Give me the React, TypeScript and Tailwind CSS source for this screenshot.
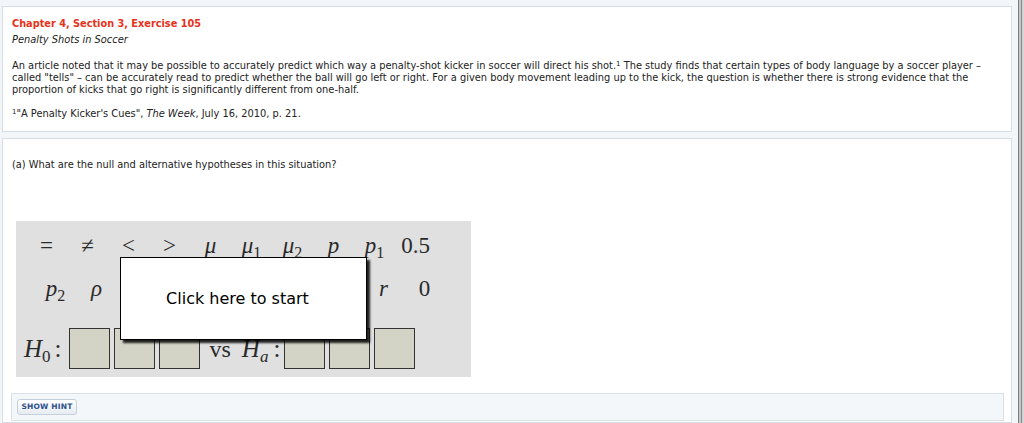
import React from "react";

const serif = "font-['Liberation_Serif','DejaVu_Serif',serif]";

interface SymProps {
  base?: string;
  sub?: string;
  italic?: boolean;
}

const Sym = ({ base, sub, italic }: SymProps) => (
  <span className="inline-flex h-[23px] w-[41px] shrink-0 items-baseline justify-center">
    {base && <span className={italic ? "italic" : ""}>{base}</span>}
    {sub && <span className="relative top-[5px] text-[16px] not-italic">{sub}</span>}
  </span>
);

const Box = () => <span className="h-[41px] w-[41px] shrink-0 border-[1.5px] border-[#333] bg-[#d4d4c6]" />;

export default function App() {
  const row1: SymProps[] = [
    { base: "=" },
    { base: "≠" },
    { base: "<" },
    { base: ">" },
    { base: "μ", italic: true },
    { base: "μ", sub: "1", italic: true },
    { base: "μ", sub: "2", italic: true },
    { base: "p", italic: true },
    { base: "p", sub: "1", italic: true },
    { base: "0.5" },
  ];
  // the middle of this row sits under the start overlay
  const row2: SymProps[] = [
    { base: "p", sub: "2", italic: true },
    { base: "ρ", italic: true },
    {},
    {},
    {},
    {},
    {},
    {},
    { base: "r", italic: true },
    { base: "0" },
  ];

  return (
    <div className="flex h-[423px] w-full overflow-hidden bg-[#f3f6f9] font-['DejaVu_Sans','Verdana',sans-serif] text-[9.85px] text-[#222]">
      <div className="flex min-w-0 flex-1 flex-col gap-[6px] pl-[2px] pr-[6px] pt-[6px]">
        <section className="border border-[#d5dde6] bg-white px-[9px] pb-[11px] pt-[10px]">
          <h1 className="text-[9.75px] font-bold leading-[13px] text-[#e8311a]">Chapter 4, Section 3, Exercise 105</h1>
          <p className="mt-[4px] italic leading-[12px]">Penalty Shots in Soccer</p>
          <p className="mt-[14px] leading-[12px] whitespace-nowrap">
            <span className="block">
              An article noted that it may be possible to accurately predict which way a penalty-shot kicker in soccer will direct his shot.
              <sup className="text-[7px]">1</sup> The study finds that certain types of body language by a soccer player –
            </span>
            <span className="block">
              called "tells" – can be accurately read to predict whether the ball will go left or right. For a given body movement leading up to the kick, the question is whether there is strong evidence that the
            </span>
            <span className="block">proportion of kicks that go right is significantly different from one-half.</span>
          </p>
          <p className="mt-[12px] leading-[12px]">
            <sup className="text-[7px]">1</sup>"A Penalty Kicker's Cues", <i>The Week</i>, July 16, 2010, p. 21.
          </p>
        </section>

        <section className="flex-1 border border-[#d5dde6] bg-white px-[9px] pt-[20px]">
          <p className="leading-[12px]">(a) What are the null and alternative hypotheses in this situation?</p>

          <div className={`relative ml-[4px] mt-[50px] h-[156px] w-[455px] bg-[#e0e0e0] text-[23px] leading-none text-[#2a2a2a] ${serif}`}>
            <div className="flex pl-[10px] pt-[13px]">
              {row1.map((s, i) => (
                <Sym key={i} {...s} />
              ))}
            </div>
            <div className="flex pl-[19px] pt-[20px]">
              {row2.map((s, i) => (
                <Sym key={i} {...s} />
              ))}
            </div>
            <div className="mt-[28px] flex items-center pl-[8px]">
              <span className="flex items-baseline text-[25px]">
                <span className="italic">H</span>
                <span className="relative top-[5px] text-[17px]">0</span>
                <span className="ml-[4px]">:</span>
              </span>
              <span className="ml-[7px] flex gap-[4px]">
                <Box />
                <Box />
                <Box />
              </span>
              <span className="ml-[10px] flex items-baseline text-[25px]">
                <span className="text-[24px]">vs</span>
                <span className="ml-[11px] italic">H</span>
                <span className="relative top-[5px] text-[17px] italic">a</span>
                <span className="ml-[5px]">:</span>
              </span>
              <span className="ml-[4px] flex gap-[4px]">
                <Box />
                <Box />
                <Box />
              </span>
            </div>

            <button className="absolute left-[104px] top-[36px] flex h-[83px] w-[247px] items-center justify-center border border-black bg-white pr-[12px] font-['DejaVu_Sans','Verdana',sans-serif] text-[16px] text-black shadow-[3px_3px_2px_rgba(0,0,0,0.85)]">
              Click here to start
            </button>
          </div>

          <div className="-ml-[1px] -mr-[2px] mt-[16px] flex h-[28px] items-center border border-[#d8e0e8] bg-[#f4f7fa] px-[5px]">
            <button className="flex h-[16px] w-[60px] items-center justify-center rounded-[3px] border border-[#c5cfd9] bg-gradient-to-b from-white to-[#e6ecf2] text-[7.5px] font-bold tracking-[0.2px] text-[#2b4f8a]">
              SHOW HINT
            </button>
          </div>
        </section>
      </div>
      <div className="flex w-[6px] shrink-0">
        <div className="w-[1px] bg-[#7e7e7e]" />
        <div className="w-[2px] bg-[#c6c6c6]" />
        <div className="w-[1px] bg-[#8a8a8a]" />
        <div className="w-[2px] bg-[#d4d4d4]" />
      </div>
    </div>
  );
}
